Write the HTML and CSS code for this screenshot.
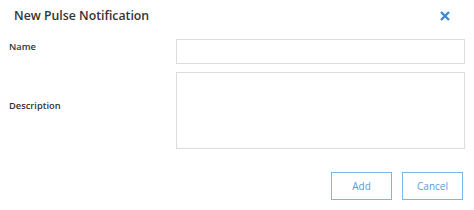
FILE: index.html
```html
<!DOCTYPE html>
<html lang="en">
<head>
  <meta charset="UTF-8" />
  <title>New Pulse Notification</title>
  <link rel="stylesheet" href="styles.css">
</head>
<body>
  <div class="dialog">
    <div class="dialog-header">
      <h2 class="dialog-title">New Pulse Notification</h2>
      <button class="close-btn" aria-label="Close">
        <svg width="10" height="10" viewBox="0 0 10 10">
          <path d="M1 1 L9 9 M9 1 L1 9" stroke="#3b8ad6" stroke-width="2.4" stroke-linecap="butt" fill="none"/>
        </svg>
      </button>
    </div>

    <div class="form-row">
      <label class="form-label" for="name">Name</label>
      <input class="form-input" id="name" type="text">
    </div>

    <div class="form-row">
      <label class="form-label" for="desc">Description</label>
      <textarea class="form-textarea" id="desc"></textarea>
    </div>

    <div class="dialog-actions">
      <button class="btn">Add</button>
      <button class="btn">Cancel</button>
    </div>
  </div>
</body>
</html>
```

FILE: styles.css
```css
body {
  margin: 0;
  background: #fff;
  font-family: 'Open Sans', 'Noto Sans', sans-serif;
  color: #333;
}
.dialog {
  width: 474px;
  height: 210px;
  box-sizing: border-box;
  padding: 0 9px 0 9px;
}
.dialog-header {
  display: flex;
  align-items: center;
  justify-content: space-between;
  height: 31px;
  padding: 0 15px 0 5px;
  margin-bottom: 8px;
}
.dialog-title {
  margin: 0;
  font-size: 12.3px;
  font-weight: 600;
  color: #333;
}
.close-btn {
  border: none;
  background: none;
  padding: 0;
  width: 10px;
  height: 10px;
  display: flex;
  cursor: pointer;
}
.form-row {
  display: flex;
  align-items: center;
  margin-bottom: 8px;
}
.form-label {
  width: 167px;
  margin-bottom: 10px;
  font-size: 9.3px;
  font-weight: 600;
  color: #333;
}
.form-input,
.form-textarea {
  width: 289px;
  box-sizing: border-box;
  border: 1px solid #dcdcdc;
  border-radius: 0;
  margin: 0;
  padding: 4px;
  font-family: inherit;
  resize: none;
}
.form-input {
  height: 25px;
}
.form-textarea {
  height: 77px;
  display: block;
}
.dialog-actions {
  display: flex;
  justify-content: flex-end;
  gap: 10px;
  padding-right: 2px;
  margin-top: 23px;
}
.btn {
  width: 61px;
  height: 28px;
  background: #fff;
  border: 1px solid #7fb5e6;
  color: #5b9bd5;
  font-family: inherit;
  font-size: 10px;
  cursor: pointer;
}
```
